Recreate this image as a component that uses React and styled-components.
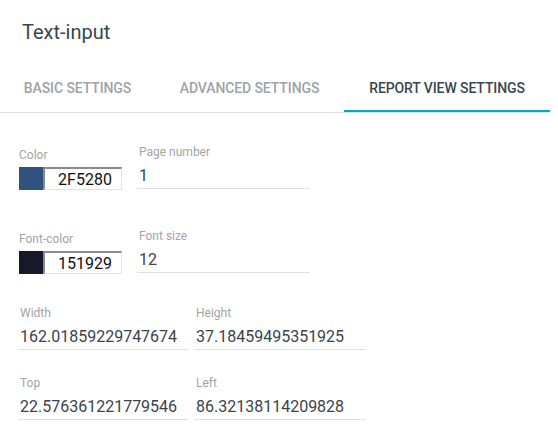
import React from 'react'
import styled, { createGlobalStyle } from 'styled-components'

const GlobalStyle = createGlobalStyle`
  html, body {
    margin: 0;
    padding: 0;
    background: #fff;
  }
  body {
    font-family: Roboto, "Noto Sans", "Liberation Sans", sans-serif;
  }
`

const Dialog = styled.div`
  width: 550px;
  background: #fff;
`

const Header = styled.div`
  height: 64px;
  display: flex;
  align-items: center;
  padding-left: 22px;
  font-size: 20px;
  color: #37474f;
`

const TabBar = styled.div`
  display: flex;
  border-bottom: 1px solid #dfe3e6;
`

const Tab = styled.div`
  width: ${p => p.$w}px;
  height: 48px;
  box-sizing: border-box;
  flex: 0 0 auto;
  display: flex;
  align-items: center;
  justify-content: center;
  padding-top: 2px;
  font-size: 14px;
  font-weight: 500;
  letter-spacing: -0.1px;
  text-transform: uppercase;
  white-space: nowrap;
  color: ${p => (p.$active ? '#37474f' : '#9ea3a7')};
  border-bottom: 2px solid ${p => (p.$active ? '#00acc1' : 'transparent')};
`

const Content = styled.div`
  padding: 32px 0 0 18px;
`

const Row = styled.div`
  display: flex;
  align-items: flex-start;
  gap: ${p => p.$gap || 0}px;
  margin-bottom: ${p => p.$mb || 0}px;
`

const ColorBlock = styled.div`
  width: 104px;
  margin: 3px 14px 0 1px;
`

const Label = styled.div`
  font-size: 12px;
  line-height: 14px;
  color: #a0a4a8;
  padding-left: 2px;
`

const ColorLabel = styled(Label)`
  padding-left: 0;
  margin-bottom: 5px;
`

const ColorPicker = styled.div`
  display: flex;
  height: 23px;
`

const Swatch = styled.div`
  width: 24px;
  background: ${p => p.$color};
`

const HexInput = styled.div`
  width: 79px;
  box-sizing: border-box;
  border-style: solid;
  border-width: 2px 1px 1px 2px;
  border-color: #8a8a8a #e4e4e4 #e4e4e4 #8a8a8a;
  display: flex;
  align-items: center;
  justify-content: center;
  padding-left: 4px;
  font-size: 16px;
  color: #111;
`

const Field = styled.div`
  width: ${p => p.$w}px;
  display: flex;
  flex-direction: column;
`

const Value = styled.div`
  margin-top: 7px;
  font-size: 16px;
  line-height: 20px;
  padding: 0 0 2px 2px;
  color: #3b4449;
  border-bottom: 1px solid #e0e0e0;
`

const TextField = ({ label, value, w }) => (
  <Field $w={w}>
    <Label>{label}</Label>
    <Value>{value}</Value>
  </Field>
)

const ColorField = ({ label, color, hex }) => (
  <ColorBlock>
    <ColorLabel>{label}</ColorLabel>
    <ColorPicker>
      <Swatch $color={color} />
      <HexInput>{hex}</HexInput>
    </ColorPicker>
  </ColorBlock>
)

export default function App() {
  return (
    <Dialog>
      <GlobalStyle />
      <Header>Text-input</Header>
      <TabBar>
        <Tab $w={155}>Basic settings</Tab>
        <Tab $w={189}>Advanced settings</Tab>
        <Tab $w={206} $active>Report view settings</Tab>
      </TabBar>
      <Content>
        <Row $mb={39}>
          <ColorField label="Color" color="#2F5280" hex="2F5280" />
          <TextField label="Page number" value="1" w={173} />
        </Row>
        <Row $mb={32}>
          <ColorField label="Font-color" color="#151929" hex="151929" />
          <TextField label="Font size" value="12" w={173} />
        </Row>
        <Row $gap={5} $mb={26}>
          <TextField label="Width" value="162.01859229747674" w={171} />
          <TextField label="Height" value="37.18459495351925" w={172} />
        </Row>
        <Row $gap={5}>
          <TextField label="Top" value="22.576361221779546" w={171} />
          <TextField label="Left" value="86.32138114209828" w={172} />
        </Row>
      </Content>
    </Dialog>
  )
}
